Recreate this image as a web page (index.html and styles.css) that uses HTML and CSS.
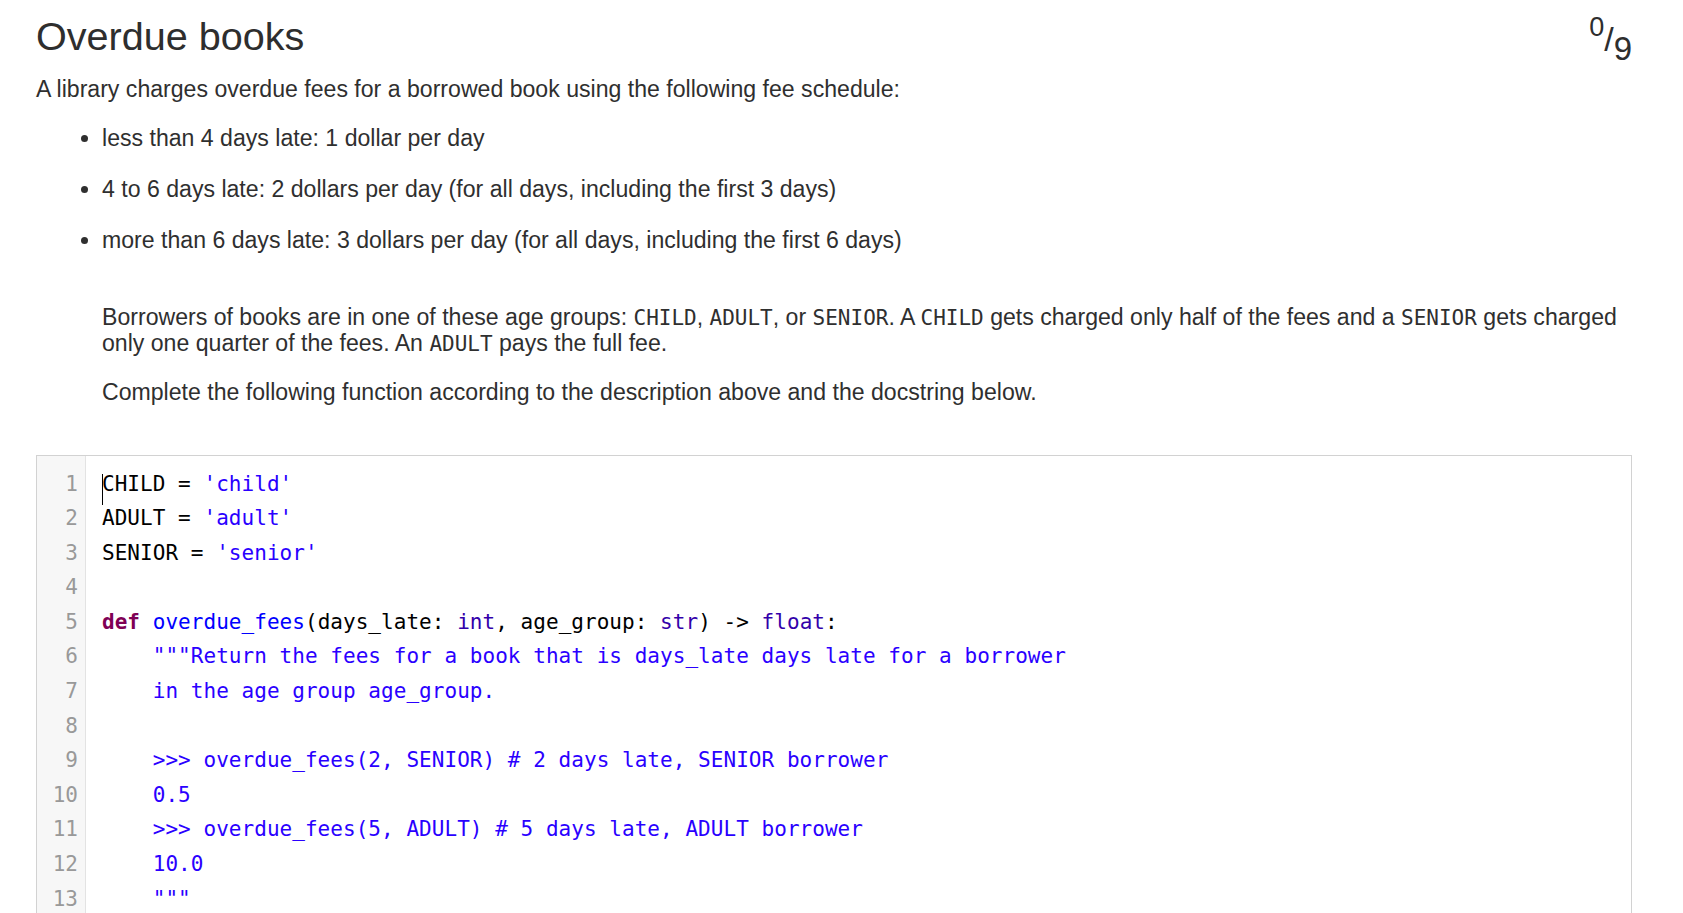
FILE: index.html
```html
<!DOCTYPE html>
<html lang="en">
<head>
<meta charset="utf-8">
<title>Overdue books</title>
<link rel="stylesheet" href="styles.css">
</head>
<body>
<div class="page">
  <header class="head">
    <h1 class="title">Overdue books</h1>
    <div class="score"><span class="num">0</span><span class="slash">/</span><span class="den">9</span></div>
  </header>
  <p class="intro">A library charges overdue fees for a borrowed book using the following fee schedule:</p>
  <ul class="fees">
    <li>less than 4 days late: 1 dollar per day</li>
    <li>4 to 6 days late: 2 dollars per day (for all days, including the first 3 days)</li>
    <li>more than 6 days late: 3 dollars per day (for all days, including the first 6 days)</li>
  </ul>
  <div class="indent">
    <p class="para">Borrowers of books are in one of these age groups: <code>CHILD</code>, <code>ADULT</code>, or <code>SENIOR</code>. A <code>CHILD</code> gets charged only half of the fees and a <code>SENIOR</code> gets charged only one quarter of the fees. An <code>ADULT</code> pays the full fee.</p>
    <p class="para">Complete the following function according to the description above and the docstring below.</p>
  </div>
  <div class="editor">
    <div class="gutter">
      <div class="ln">1</div><div class="ln">2</div><div class="ln">3</div><div class="ln">4</div><div class="ln">5</div><div class="ln">6</div><div class="ln">7</div><div class="ln">8</div><div class="ln">9</div><div class="ln">10</div><div class="ln">11</div><div class="ln">12</div><div class="ln">13</div><div class="ln">14</div>
    </div>
    <div class="code">
      <div class="line"><span class="caret"></span>CHILD = <span class="str">'child'</span></div>
      <div class="line">ADULT = <span class="str">'adult'</span></div>
      <div class="line">SENIOR = <span class="str">'senior'</span></div>
      <div class="line"></div>
      <div class="line"><span class="kw">def</span> <span class="def">overdue_fees</span>(days_late: <span class="bi">int</span>, age_group: <span class="bi">str</span>) -&gt; <span class="bi">float</span>:</div>
      <div class="line">    <span class="str">"""Return the fees for a book that is days_late days late for a borrower</span></div>
      <div class="line"><span class="str">    in the age group age_group.</span></div>
      <div class="line"></div>
      <div class="line"><span class="str">    &gt;&gt;&gt; overdue_fees(2, SENIOR) # 2 days late, SENIOR borrower</span></div>
      <div class="line"><span class="str">    0.5</span></div>
      <div class="line"><span class="str">    &gt;&gt;&gt; overdue_fees(5, ADULT) # 5 days late, ADULT borrower</span></div>
      <div class="line"><span class="str">    10.0</span></div>
      <div class="line"><span class="str">    """</span></div>
      <div class="line"></div>
    </div>
  </div>
</div>
</body>
</html>
```
FILE: styles.css
```css
html, body {
  margin: 0;
  padding: 0;
  background: #ffffff;
}

body {
  font-family: "Liberation Sans", Arial, sans-serif;
  color: #2f2f2f;
}

.page {
  margin: 0 51px 0 36px;
  padding-top: 14px;
}

.head {
  display: flex;
  justify-content: space-between;
  align-items: flex-start;
}

.title {
  margin: 0;
  font-size: 39.6px;
  font-weight: 400;
  line-height: 44.8px;
  color: #2e2e2e;
}

.score {
  display: flex;
  align-items: flex-start;
  color: #2e2e2e;
}

.num {
  font-size: 27px;
  line-height: 27px;
  margin-top: 0;
}

.slash {
  font-size: 34px;
  line-height: 34px;
  margin-top: 8px;
}

.den {
  font-size: 33px;
  line-height: 33px;
  margin-top: 18px;
}

.intro {
  margin: 11.6px 0 0 0;
  font-size: 23.1px;
  line-height: 24.7px;
}

.fees {
  margin: 24.6px 0 0 0;
  padding-left: 66px;
  font-size: 23.1px;
  line-height: 24.7px;
}

.fees li {
  margin-bottom: 26.3px;
}

.fees li:last-child {
  margin-bottom: 0;
}

.indent {
  padding-left: 66px;
  margin-top: 52.3px;
}

.para {
  margin: 0 0 23.5px 0;
  font-size: 23.1px;
  line-height: 24.7px;
}

.para:last-child {
  margin-bottom: 0;
}

code {
  font-family: "DejaVu Sans Mono", "Liberation Mono", monospace;
  font-size: 21px;
  color: #2f2f2f;
}

.editor {
  margin-top: 50px;
  border: 1px solid #d2d2d2;
  display: flex;
  font-family: "DejaVu Sans Mono", "Liberation Mono", monospace;
  font-size: 21px;
  letter-spacing: 0.04px;
  line-height: 34.6px;
}

.gutter {
  width: 48px;
  flex: none;
  background: #f7f7f7;
  border-right: 1px solid #e3e3e3;
  padding-top: 11px;
  color: #999999;
  text-align: right;
}

.ln {
  height: 34.6px;
  padding-right: 7px;
}

.code {
  flex: 1;
  padding-top: 11px;
  padding-left: 16px;
  color: #000000;
}

.line {
  height: 34.6px;
  white-space: pre;
}

.caret {
  display: inline-block;
  width: 0;
  height: 31px;
  border-left: 1px solid #000;
  vertical-align: -14px;
  margin-right: -1px;
}

.kw {
  color: #7f0055;
  font-weight: bold;
}

.def {
  color: #0000ff;
}

.bi {
  color: #3300aa;
}

.str {
  color: #2a00ff;
}
```
